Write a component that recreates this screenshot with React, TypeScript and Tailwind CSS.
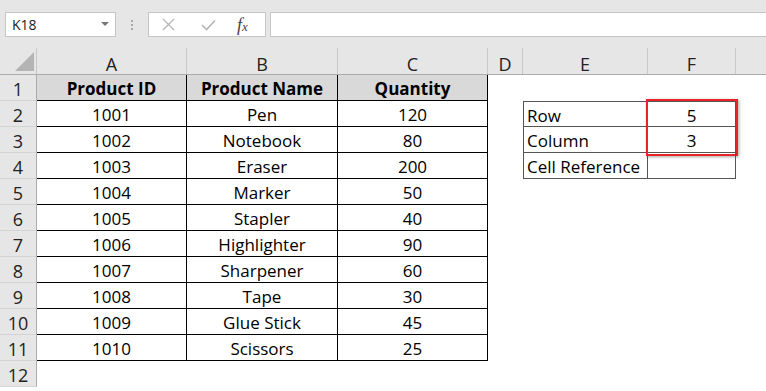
import React from "react"

const COLS = ["A", "B", "C", "D", "E", "F", ""]

const products = [
  ["1001", "Pen", "120"],
  ["1002", "Notebook", "80"],
  ["1003", "Eraser", "200"],
  ["1004", "Marker", "50"],
  ["1005", "Stapler", "40"],
  ["1006", "Highlighter", "90"],
  ["1007", "Sharpener", "60"],
  ["1008", "Tape", "30"],
  ["1009", "Glue Stick", "45"],
  ["1010", "Scissors", "25"],
]

const lookup: Record<number, [string, string]> = {
  2: ["Row", "5"],
  3: ["Column", "3"],
  4: ["Cell Reference", ""],
}

const gridCols = "grid grid-cols-[37px_150px_151px_150px_35px_125px_88px_30px]"

function FormulaBar() {
  return (
    <div className="h-[48px] bg-[#e6e6e6] pt-[12px] flex items-start">
      <div className="ml-[5px] w-[111px] h-[25px] bg-white border border-[#c6c6c6] flex items-center justify-between pl-[6px] pr-[6px] text-[14px] text-[#222]">
        <span>K18</span>
        <svg width="8" height="5" viewBox="0 0 8 5">
          <path d="M0 0 L8 0 L4 4 Z" fill="#777" />
        </svg>
      </div>
      <div className="w-[32px] h-[25px] flex flex-col items-center justify-center gap-[2px]">
        <span className="w-[2px] h-[2px] bg-[#aaa]" />
        <span className="w-[2px] h-[2px] bg-[#aaa]" />
        <span className="w-[2px] h-[2px] bg-[#aaa]" />
      </div>
      <div className="w-[118px] h-[25px] bg-white border border-[#c6c6c6] flex items-center">
        <svg className="ml-[13px]" width="13" height="13" viewBox="0 0 13 13">
          <path d="M1 1 L12 12 M12 1 L1 12" stroke="#b5b5b5" strokeWidth="1.3" />
        </svg>
        <svg className="ml-[26px]" width="15" height="12" viewBox="0 0 15 12">
          <path d="M1 6 L5.5 10.5 L14 1.5" stroke="#b5b5b5" strokeWidth="1.6" fill="none" />
        </svg>
        <span className="ml-[21px] italic font-['Liberation_Serif',serif] text-[18px] text-[#444] leading-none">
          f<span className="text-[13px]">x</span>
        </span>
      </div>
      <div className="ml-[4px] flex-1 h-[25px] bg-white border border-[#c6c6c6] border-r-0" />
    </div>
  )
}

function ColumnHeader() {
  return (
    <div className={`${gridCols} h-[27px] bg-[#e6e6e6] border-b border-[#ababab]`}>
      <div className="relative border-r border-[#c8c8c8]">
        <svg className="absolute left-[15px] top-[4px]" width="19" height="19" viewBox="0 0 19 19">
          <path d="M19 0 L19 19 L0 19 Z" fill="#b4b4b4" />
        </svg>
      </div>
      {COLS.map((c, i) => (
        <div
          key={i}
          className={`flex items-end justify-center pb-[1px] text-[18px] text-[#222] ${i < 6 ? "border-r border-[#c8c8c8]" : ""}`}
        >
          {c}
        </div>
      ))}
    </div>
  )
}

function RowHead({ n }: { n: number }) {
  return (
    <div className="flex items-center justify-center pt-[2px] bg-[#e6e6e6] border-r border-[#ababab] border-b border-b-[#d4d4d4] text-[18px] text-[#222]">
      {n}
    </div>
  )
}

function SheetRow({ n }: { n: number }) {
  const inTable = n <= 11
  const isHead = n === 1
  const data = isHead ? ["Product ID", "Product Name", "Quantity"] : products[n - 2]
  const side = lookup[n]
  const cell = inTable
    ? `flex items-center justify-center pt-[2px] border-r border-b border-black ${isHead ? "bg-[#d9d9d9] font-bold" : ""}`
    : ""

  return (
    <div className={`${gridCols} h-[26px]`}>
      <RowHead n={n} />
      {inTable ? (
        data.map((v, i) => (
          <div key={i} className={cell}>
            {v}
          </div>
        ))
      ) : (
        <>
          <div />
          <div />
          <div />
        </>
      )}
      <div />
      {side ? (
        <>
          <div className={`flex items-center pl-[3px] pt-[2px] border-l border-r border-b border-[#555] ${n === 2 ? "border-t" : ""}`}>
            {side[0]}
          </div>
          <div className={`relative flex items-center justify-center pt-[2px] border-r border-b border-[#555] ${n === 2 ? "border-t" : ""}`}>
            {side[1]}
            {n === 2 && (
              <div className="absolute left-[-2px] top-[-3px] w-[92px] h-[57px] border-2 border-[#e8242a] shadow-[1px_1px_3px_rgba(0,0,0,0.35)]" />
            )}
          </div>
        </>
      ) : (
        <>
          <div />
          <div />
        </>
      )}
      <div />
    </div>
  )
}

export default function App() {
  return (
    <div className="w-[766px] h-[391px] overflow-hidden bg-white font-['Open_Sans',sans-serif] text-[17px] text-black leading-none">
      <FormulaBar />
      <ColumnHeader />
      {Array.from({ length: 12 }, (_, i) => (
        <SheetRow key={i} n={i + 1} />
      ))}
    </div>
  )
}
